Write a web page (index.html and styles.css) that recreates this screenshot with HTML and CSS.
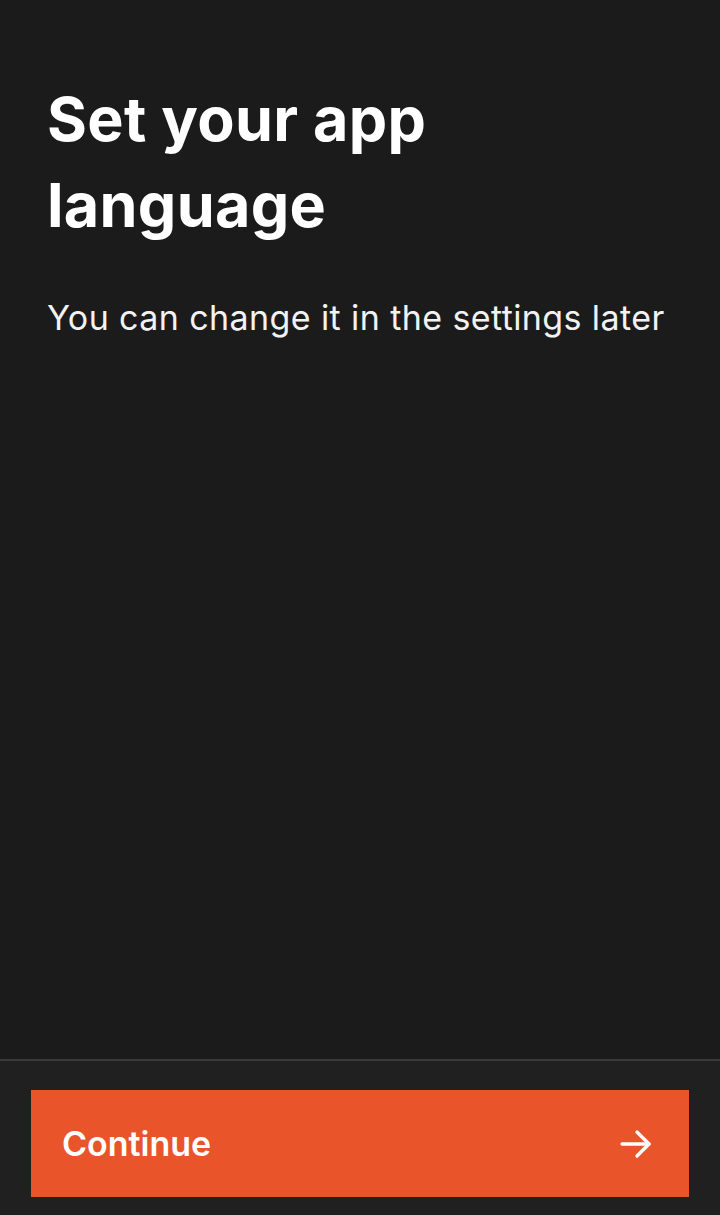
FILE: index.html
```html
<!DOCTYPE html>
<html lang="en">
<head>
    <meta charset="UTF-8">
    <meta name="viewport" content="width=device-width, initial-scale=1.0">
    <title>Set your app language</title>
    <link rel="stylesheet" href="styles.css">
</head>
<body>

<div class="screen">
    <div class="content">
        <h1 class="title">Set your app language</h1>
        <p class="subtitle">You can change it in the settings later</p>
    </div>

    <div class="footer">
        <button class="btn-continue">
            <span>Continue</span>
            <svg class="arrow" width="34" height="30" viewBox="0 0 34 30" fill="none" stroke="#fff" stroke-width="3.4" stroke-linecap="round" stroke-linejoin="round">
                <path d="M3 15 H30"/>
                <path d="M18 3 L30 15 L18 27"/>
            </svg>
        </button>
    </div>
</div>

</body>
</html>
```

FILE: styles.css
```css
body {
    margin: 0;
    background-color: #1b1b1b;
    font-family: Inter, "Noto Sans", sans-serif;
    color: #fff;
}
.screen {
    display: flex;
    flex-direction: column;
    height: 1215px;
}
.content {
    flex: 1;
    padding: 76px 40px 0 47px;
}
.title {
    margin: 0;
    width: 440px;
    font-size: 61px;
    font-weight: 700;
    line-height: 86px;
    letter-spacing: 0.3px;
}
.subtitle {
    margin: 50px 0 0 0;
    font-size: 34px;
    font-weight: 400;
    line-height: 40px;
    letter-spacing: 0.4px;
    color: #f2f2f2;
}
.footer {
    border-top: 2px solid #3b3b3b;
    background-color: #202020;
    padding: 29px 31px 18px 31px;
}
.btn-continue {
    display: flex;
    justify-content: space-between;
    align-items: center;
    width: 100%;
    height: 107px;
    padding: 0 36px 0 31px;
    border: none;
    background-color: #e9542a;
    color: #fff;
    font-family: Inter, "Noto Sans", sans-serif;
    font-size: 34px;
    font-weight: 600;
    cursor: pointer;
}
```
